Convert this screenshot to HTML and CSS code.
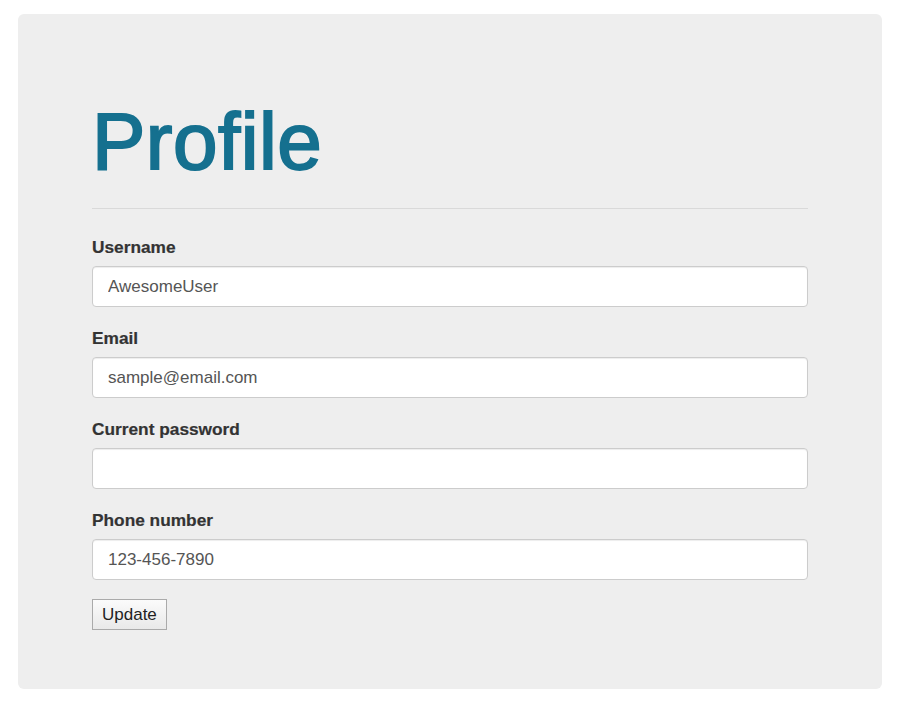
FILE: index.html
```html
<!DOCTYPE html>
<html lang="en">
<head>
<meta charset="utf-8">
<title>Profile</title>
<link rel="stylesheet" href="styles.css">
</head>
<body>
<div class="card">
  <h1 class="title">Profile</h1>
  <hr class="rule">
  <form class="form">
    <div class="field">
      <label class="label" for="username">Username</label>
      <input class="input" id="username" type="text" value="AwesomeUser">
    </div>
    <div class="field">
      <label class="label" for="email">Email</label>
      <input class="input" id="email" type="text" value="sample@email.com">
    </div>
    <div class="field">
      <label class="label" for="password">Current password</label>
      <input class="input" id="password" type="password" value="">
    </div>
    <div class="field">
      <label class="label" for="phone">Phone number</label>
      <input class="input" id="phone" type="text" value="123-456-7890">
    </div>
    <button class="btn" type="button">Update</button>
  </form>
</div>
</body>
</html>
```

FILE: styles.css
```css
html, body {
  margin: 0;
  padding: 0;
  background: #ffffff;
}
body {
  padding: 14px 18px;
  font-family: "Liberation Sans", Arial, Helvetica, sans-serif;
  color: #333333;
}
.card {
  background: #eeeeee;
  border-radius: 6px;
  padding: 84px 74px 0 74px;
  height: 591px;
}
.title {
  margin: 0 0 22px 0;
  font-size: 80px;
  line-height: 88px;
  font-weight: normal;
  color: #15708f;
  -webkit-text-stroke: 2px #15708f;
  letter-spacing: 0.5px;
}
.rule {
  margin: 0;
  border: 0;
  height: 1px;
  background: #d9d9d9;
}
.form {
  display: flex;
  flex-direction: column;
  align-items: flex-start;
  padding-top: 28px;
}
.field {
  display: flex;
  flex-direction: column;
  width: 100%;
  margin-bottom: 21px;
}
.field:last-of-type {
  margin-bottom: 19px;
}
.label {
  font-size: 17.3px;
  line-height: 20px;
  font-weight: bold;
  color: #333333;
  margin-bottom: 9px;
  -webkit-text-stroke: 0.2px #333333;
}
.input {
  box-sizing: border-box;
  width: 100%;
  height: 41px;
  margin: 0;
  padding: 0 15px;
  font-family: "Liberation Sans", Arial, Helvetica, sans-serif;
  font-size: 17px;
  color: #555555;
  background: #ffffff;
  border: 1px solid #cccccc;
  border-radius: 4px;
  box-shadow: inset 0 1px 1px rgba(0, 0, 0, 0.075);
  outline: none;
}
.btn {
  box-sizing: border-box;
  height: 31px;
  margin: 0;
  padding: 0 9px;
  font-family: "Liberation Sans", Arial, Helvetica, sans-serif;
  font-size: 17px;
  color: #222222;
  background: linear-gradient(#fbfbfb, #e9e9e9);
  border: 1px solid #aaaaaa;
  border-radius: 0;
}
```
